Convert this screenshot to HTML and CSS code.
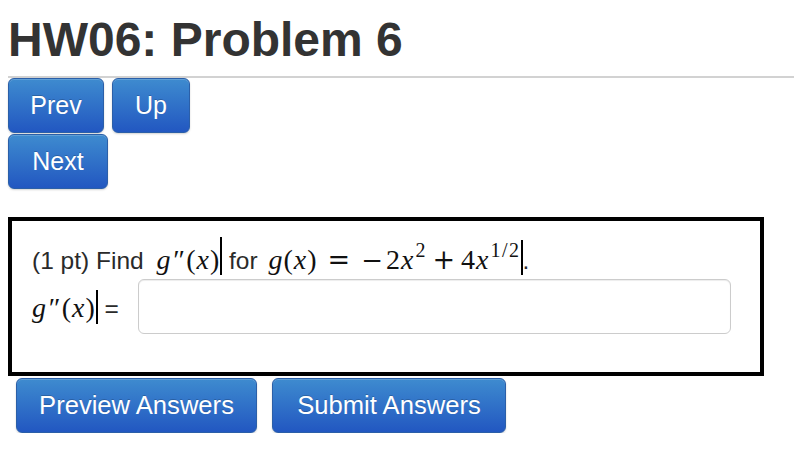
FILE: index.html
```html
<!DOCTYPE html>
<html lang="en">
<head>
<meta charset="utf-8">
<title>HW06: Problem 6</title>
<link rel="stylesheet" href="styles.css">
</head>
<body>
<h1 class="title">HW06: Problem 6</h1>
<div class="rule"></div>
<nav class="nav">
  <div class="nav-row">
    <a class="btn btn-prev">Prev</a>
    <a class="btn btn-up">Up</a>
  </div>
  <div class="nav-row">
    <a class="btn btn-next">Next</a>
  </div>
</nav>
<div class="problem">
  <p class="q-text">(1 pt) Find <span class="math m-first"><i>g</i><span class="prime">″</span><span class="paren">(</span><i>x</i><span class="paren">)</span></span><span class="caret"></span> for <span class="math m-second"><i>g</i><span class="paren">(</span><i>x</i><span class="paren">)</span><span class="rel">=</span><span class="op">−</span><span class="num">2</span><i>x</i><span class="sup">2</span><span class="bin">+</span><span class="num">4</span><i>x</i><span class="sup sup-frac">1/2</span></span><span class="caret caret-short"></span>.</p>
  <div class="answer-row">
    <span class="answer-label"><span class="math"><i>g</i><span class="prime">″</span><span class="paren">(</span><i>x</i><span class="paren">)</span></span><span class="caret caret-row"></span> =</span>
    <input class="answer" type="text">
  </div>
</div>
<div class="actions">
  <button class="btn btn-preview" type="button">Preview Answers</button>
  <button class="btn btn-submit" type="button">Submit Answers</button>
</div>
</body>
</html>
```

FILE: styles.css
```css
body {
  margin: 0;
  padding: 0 8px;
  background: #fff;
  color: #333;
  font-family: "Liberation Sans", Arial, sans-serif;
}

.title {
  margin: 14px 0 0;
  font-size: 48px;
  line-height: 52px;
  font-weight: bold;
  color: #333;
}

.rule {
  height: 2px;
  margin: 10px -8px 0 0;
  background: #d2d2d2;
}

.nav-row {
  display: flex;
  gap: 8px;
}

.nav-row + .nav-row {
  margin-top: 1px;
}

.btn {
  display: inline-flex;
  align-items: center;
  justify-content: center;
  box-sizing: border-box;
  height: 55px;
  padding: 0;
  font-family: "Liberation Sans", Arial, sans-serif;
  font-size: 25px;
  color: #fff;
  text-decoration: none;
  border: 1px solid #2b5fa8;
  border-radius: 6px;
  background: linear-gradient(#3e8bcf, #2257c1);
  box-shadow: 0 1px 2px rgba(0, 0, 0, 0.18), inset 0 1px 0 rgba(255, 255, 255, 0.18);
  text-shadow: 0 -1px 0 rgba(0, 0, 0, 0.2);
}

.btn-prev { width: 96px; }
.btn-up { width: 78px; }
.btn-next { width: 100px; }
.btn-preview { width: 241px; font-size: 25.6px; }
.btn-submit { width: 234px; font-size: 25.6px; }

.problem {
  box-sizing: border-box;
  width: 756px;
  margin-top: 28px;
  padding: 22px 20px 38px;
  border: 4px solid #000;
}

.q-text {
  margin: 0;
  font-size: 24.5px;
  line-height: 34px;
  color: #2a2a2a;
}

.math {
  font-family: "Liberation Serif", "Times New Roman", serif;
  font-size: 28px;
  color: #111;
}

.math i {
  font-style: italic;
}

.m-first {
  margin-left: 6px;
}

.m-second {
  margin-left: 4px;
}

.prime {
  font-style: italic;
  margin: 0 2px 0 1px;
}

.paren {
  margin: 0 1px;
}

.rel {
  font-family: "DejaVu Serif", serif;
  font-size: 27px;
  margin: 0 7px 0 10px;
}

.op {
  font-family: "DejaVu Serif", serif;
  font-size: 26px;
  margin: 0 3px 0 4px;
}

.bin {
  font-family: "DejaVu Serif", serif;
  font-size: 27px;
  margin: 0 6px 0 7px;
}

.num {
  letter-spacing: 1px;
}

.sup {
  display: inline-block;
  font-size: 20px;
  line-height: 0;
  vertical-align: 12px;
  margin-left: 2px;
}

.sup-frac {
  letter-spacing: 1.5px;
}

.caret {
  display: inline-block;
  width: 0;
  height: 38px;
  margin-top: -10px;
  border-left: 2px solid #000;
  vertical-align: -6px;
}

.caret-short {
  height: 35px;
}

.answer-row {
  display: flex;
  align-items: center;
  height: 55px;
  margin-top: 1px;
}

.answer-label {
  width: 106px;
  font-size: 24.5px;
  white-space: nowrap;
  color: #2a2a2a;
}

.caret-row {
  height: 34px;
  margin-top: 0;
  vertical-align: -7px;
}

.answer {
  box-sizing: border-box;
  width: 593px;
  height: 55px;
  margin: 0;
  border: 1px solid #ccc;
  border-radius: 6px;
  box-shadow: inset 0 1px 1px rgba(0, 0, 0, 0.075);
  background: #fff;
}

.actions {
  display: flex;
  gap: 15px;
  margin-top: 2px;
  padding-left: 8px;
}
```
